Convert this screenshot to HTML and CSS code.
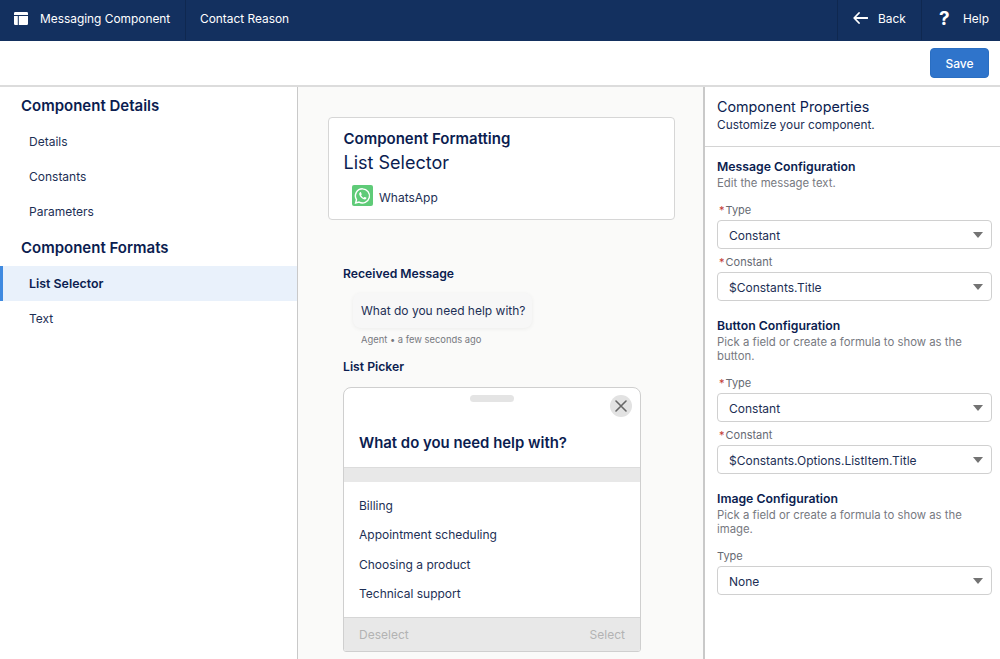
FILE: index.html
```html
<!DOCTYPE html>
<html lang="en">
<head>
<meta charset="utf-8">
<title>Messaging Component</title>
<link rel="stylesheet" href="styles.css">
</head>
<body>
<header class="topbar">
  <div class="tab tab-main">
    <svg class="tab-icon" width="14" height="13" viewBox="0 0 14 13"><path fill="#fff" d="M1.200 0h11.600A1.200 1.200 0 0 1 14 1.200V3H0V1.200A1.200 1.200 0 0 1 1.200 0zM0 4h3.800v9H1.200A1.200 1.200 0 0 1 0 11.800zM4.800 4H14v7.800a1.200 1.200 0 0 1-1.200 1.200h-8z"/></svg>
    <span>Messaging Component</span>
  </div>
  <div class="tab tab-second"><span>Contact Reason</span></div>
  <div class="spacer"></div>
  <div class="tab tab-action tab-back">
    <svg width="15" height="12" viewBox="0 0 15 12"><path d="M6 1 1.200 6 6 11M1.500 6H14.500" fill="none" stroke="#fff" stroke-width="1.800" stroke-linecap="round" stroke-linejoin="round"/></svg>
    <span>Back</span>
  </div>
  <div class="tab tab-action tab-help">
    <span class="q">?</span>
    <span>Help</span>
  </div>
</header>
<div class="toolbar"><button class="save">Save</button></div>
<main class="columns">
  <nav class="left">
    <h2 class="nav-title">Component Details</h2>
    <a class="nav-item">Details</a>
    <a class="nav-item">Constants</a>
    <a class="nav-item">Parameters</a>
    <h2 class="nav-title nav-title-2">Component Formats</h2>
    <a class="nav-item active">List Selector</a>
    <a class="nav-item">Text</a>
  </nav>
  <section class="center">
    <div class="card">
      <div class="card-title">Component Formatting</div>
      <div class="card-sub">List Selector</div>
      <div class="channel">
        <span class="wa">
          <svg width="22" height="22" viewBox="0 0 22 22"><path d="M11 3.500a7.400 7.400 0 0 0-6.300 11.300L3.800 18.300l3.600-.9A7.400 7.400 0 1 0 11 3.500z" fill="none" stroke="#fff" stroke-width="1.500"/><path d="M8.500 7c-.8.500-1.200 1.500-.8 2.700.7 2.100 2.500 4 4.600 4.800 1.200.4 2.200 0 2.700-.9.200-.4.100-.7-.2-.9l-1.300-.7c-.3-.1-.5 0-.7.200l-.5.600c-1.200-.5-2.200-1.500-2.800-2.700l.5-.5c.2-.2.300-.5.100-.8l-.6-1.500c-.2-.4-.5-.5-1-.3z" fill="#fff"/></svg>
        </span>
        <span class="channel-name">WhatsApp</span>
      </div>
    </div>
    <h3 class="label">Received Message</h3>
    <div class="bubble">What do you need help with?</div>
    <div class="meta">Agent • a few seconds ago</div>
    <h3 class="label label-picker">List Picker</h3>
    <div class="picker">
      <div class="picker-head">
        <span class="handle"></span>
        <span class="close"><svg width="12" height="12" viewBox="0 0 12 12"><path d="M1 1 11 11M11 1 1 11" stroke="#666" stroke-width="1.600" stroke-linecap="round"/></svg></span>
        <div class="picker-title">What do you need help with?</div>
      </div>
      <div class="picker-band"></div>
      <ul class="picker-list">
        <li>Billing</li>
        <li>Appointment scheduling</li>
        <li>Choosing a product</li>
        <li>Technical support</li>
      </ul>
      <div class="picker-foot"><span>Deselect</span><span>Select</span></div>
    </div>
  </section>
  <aside class="right">
    <div class="right-head">
      <div class="right-title">Component Properties</div>
      <div class="right-sub">Customize your component.</div>
    </div>
    <div class="group">
      <div class="group-title">Message Configuration</div>
      <div class="group-help">Edit the message text.</div>
      <div class="field-label"><i>*</i>Type</div>
      <div class="select"><span>Constant</span><b></b></div>
      <div class="field-label"><i>*</i>Constant</div>
      <div class="select"><span>$Constants.Title</span><b></b></div>
    </div>
    <div class="group">
      <div class="group-title">Button Configuration</div>
      <div class="group-help">Pick a field or create a formula to show as the button.</div>
      <div class="field-label"><i>*</i>Type</div>
      <div class="select"><span>Constant</span><b></b></div>
      <div class="field-label"><i>*</i>Constant</div>
      <div class="select"><span>$Constants.Options.ListItem.Title</span><b></b></div>
    </div>
    <div class="group">
      <div class="group-title">Image Configuration</div>
      <div class="group-help">Pick a field or create a formula to show as the image.</div>
      <div class="field-label plain">Type</div>
      <div class="select"><span>None</span><b></b></div>
    </div>
  </aside>
</main>
</body>
</html>
```
FILE: styles.css
```css
* { box-sizing: border-box; }
html, body { margin: 0; height: 659px; overflow: hidden; }
body { font-family: Inter, "Liberation Sans", sans-serif; color: #0b1d50; background: #fff; font-size: 12px; display: flex; flex-direction: column; }
.topbar { height: 41px; background: #13305f; color: #fff; display: flex; flex: none; font-size: 11.900px; }
.tab { display: flex; align-items: center; height: 40px; padding-bottom: 4px; }
.tab-main { width: 186px; padding-left: 14px; gap: 12px; border-right: 1px solid #0f2850; }
.tab-icon { flex: none; margin-top: 1px; }
.tab-second { padding-left: 14px; }
.spacer { flex: 1; }
.tab-action { border-left: 1px solid #0f2850; }
.tab-back { width: 84px; padding-left: 15px; gap: 10px; }
.tab-help { width: 79px; padding-left: 17px; gap: 14px; }
.q { font-size: 19px; font-weight: 700; width: 10px; }
.toolbar { height: 46px; flex: none; display: flex; justify-content: flex-end; align-items: center; padding-right: 11px; border-bottom: 2px solid #dcdcdc; }
.save { width: 59px; height: 30px; border: 1px solid #2a6ec2; border-radius: 4px; background: #2f74cb; color: #fff; font: 500 12px Inter, sans-serif; }
.columns { flex: 1; display: flex; min-height: 0; overflow: hidden; }
.left { width: 298px; flex: none; border-right: 1px solid #c9c9c9; padding-top: 9px; }
.nav-title { margin: 0; padding-left: 21px; font-size: 15px; font-weight: 600; line-height: 20px; height: 20px; }
.nav-title-2 { margin-top: 9px; }
.nav-item { display: block; height: 35px; line-height: 35px; padding-left: 29px; font-size: 12px; color: #1d2f55; }
.nav-title + .nav-item { margin-top: 8px; }
.active { background: #e9f1fb; font-weight: 600; font-size: 12.400px; color: #0b1d50; border-left: 3px solid #3f8ae0; padding-left: 26px; }
.center { width: 407px; flex: none; background: #fafaf9; border-right: 2px solid #c9c9c9; padding: 30px 0 0 30px; }
.card { width: 347px; height: 103px; background: #fff; border: 1px solid #d6d6d6; border-radius: 4px; padding: 11px 14.500px; }
.card-title { font-size: 15px; font-weight: 600; line-height: 20px; }
.card-sub { font-size: 18px; line-height: 26px; margin-top: 1px; }
.channel { display: flex; align-items: flex-start; gap: 6px; margin: 9px 0 0 8.500px; color: #1d2f55; }
.channel-name { margin-top: 5px; line-height: 16px; }
.wa { width: 21px; height: 21px; border-radius: 2px; background: #5fcb78; display: flex; align-items: center; justify-content: center; }
.label { margin: 0; padding-left: 15px; font-size: 12.200px; font-weight: 600; line-height: 16px; }
.card + .label { margin-top: 46px; }
.bubble { margin: 11px 0 0 25px; width: 179px; height: 35px; border-radius: 8px; background: #f7f7f7; box-shadow: 0 1px 4px rgba(0,0,0,.06); line-height: 35px; padding-left: 8px; color: #1d2f55; white-space: nowrap; }
.meta { margin: 5px 0 0 33px; font-size: 9.400px; line-height: 14px; color: #77797f; }
.label-picker { margin-top: 12px; }
.picker { margin: 12px 0 0 15px; width: 298px; height: 265px; border: 1px solid #cfcfcf; border-radius: 8px 8px 3px 3px; background: #fff; display: flex; flex-direction: column; overflow: hidden; }
.picker-head { height: 79px; flex: none; position: relative; padding: 45px 15px 0; }
.handle { position: absolute; left: 126px; top: 7px; width: 44px; height: 7px; border-radius: 4px; background: #e4e4e4; }
.close { position: absolute; right: 8px; top: 7px; width: 22px; height: 22px; border-radius: 50%; background: #e2e2e2; display: flex; align-items: center; justify-content: center; }
.picker-title { font-size: 14.900px; font-weight: 600; line-height: 20px; }
.picker-band { height: 15px; flex: none; background: #e8e8e8; border-top: 1px solid #dcdcdc; }
.picker-list { list-style: none; margin: 0; padding: 9px 15px 0; flex: 1; color: #1d2f55; }
.picker-list li { height: 29.300px; line-height: 29px; }
.picker-foot { height: 34px; flex: none; background: #e8e8e8; border-top: 1px solid #d6d6d6; color: #b3b3b3; display: flex; justify-content: space-between; align-items: center; padding: 0 15px; }
.right { flex: 1; min-width: 0; }
.right-head { height: 60px; border-bottom: 1px solid #d4d4d4; padding: 10px 12px 0; }
.right-title { font-size: 14.300px; line-height: 20px; }
.right-sub { font-size: 11.850px; line-height: 16px; color: #1d2f55; }
.group { padding: 12px 8px 0 12px; }
.group + .group { padding-top: 17px; }
.group-title { font-size: 12.250px; font-weight: 600; line-height: 16px; }
.group-help { font-size: 11.350px; line-height: 14px; color: #77797f; margin-top: 1px; }
.field-label { font-size: 11px; line-height: 14px; color: #666a72; margin-top: 13px; padding-left: 2px; }
.field-label.plain { padding-left: 0; }
.field-label i { color: #c23934; font-style: normal; margin-right: 1px; }
.select + .field-label { margin-top: 6px; }
.select { height: 29px; margin-top: 3px; border: 1px solid #d0d0d0; border-radius: 4px; background: #fff; display: flex; align-items: center; justify-content: space-between; padding: 1px 8px 0 11px; color: #1d2f55; white-space: nowrap; }
.select b { width: 0; height: 0; border-left: 5px solid transparent; border-right: 5px solid transparent; border-top: 6px solid #737373; }
```
